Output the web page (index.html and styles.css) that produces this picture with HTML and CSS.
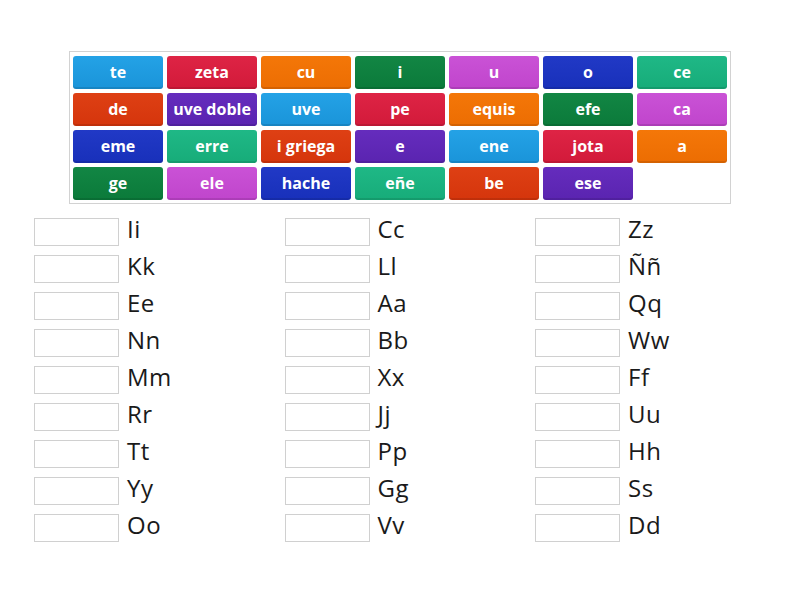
FILE: index.html
```html
<!DOCTYPE html>
<html lang="es">
<head>
<meta charset="utf-8">
<title>Abecedario</title>
<link rel="stylesheet" href="styles.css">
</head>
<body>
<div class="page">
  <div class="bank">
    <div class="tile blue">te</div>
    <div class="tile red">zeta</div>
    <div class="tile orange">cu</div>
    <div class="tile green">i</div>
    <div class="tile magenta">u</div>
    <div class="tile navy">o</div>
    <div class="tile teal">ce</div>
    <div class="tile rust">de</div>
    <div class="tile purple">uve doble</div>
    <div class="tile blue">uve</div>
    <div class="tile red">pe</div>
    <div class="tile orange">equis</div>
    <div class="tile green">efe</div>
    <div class="tile magenta">ca</div>
    <div class="tile navy">eme</div>
    <div class="tile teal">erre</div>
    <div class="tile rust">i griega</div>
    <div class="tile purple">e</div>
    <div class="tile blue">ene</div>
    <div class="tile red">jota</div>
    <div class="tile orange">a</div>
    <div class="tile green">ge</div>
    <div class="tile magenta">ele</div>
    <div class="tile navy">hache</div>
    <div class="tile teal">eñe</div>
    <div class="tile rust">be</div>
    <div class="tile purple">ese</div>
  </div>
  <div class="answers">
    <div class="col">
      <div class="row"><span class="box"></span><span class="label">Ii</span></div>
      <div class="row"><span class="box"></span><span class="label">Kk</span></div>
      <div class="row"><span class="box"></span><span class="label">Ee</span></div>
      <div class="row"><span class="box"></span><span class="label">Nn</span></div>
      <div class="row"><span class="box"></span><span class="label">Mm</span></div>
      <div class="row"><span class="box"></span><span class="label">Rr</span></div>
      <div class="row"><span class="box"></span><span class="label">Tt</span></div>
      <div class="row"><span class="box"></span><span class="label">Yy</span></div>
      <div class="row"><span class="box"></span><span class="label">Oo</span></div>
    </div>
    <div class="col">
      <div class="row"><span class="box"></span><span class="label">Cc</span></div>
      <div class="row"><span class="box"></span><span class="label">Ll</span></div>
      <div class="row"><span class="box"></span><span class="label">Aa</span></div>
      <div class="row"><span class="box"></span><span class="label">Bb</span></div>
      <div class="row"><span class="box"></span><span class="label">Xx</span></div>
      <div class="row"><span class="box"></span><span class="label">Jj</span></div>
      <div class="row"><span class="box"></span><span class="label">Pp</span></div>
      <div class="row"><span class="box"></span><span class="label">Gg</span></div>
      <div class="row"><span class="box"></span><span class="label">Vv</span></div>
    </div>
    <div class="col">
      <div class="row"><span class="box"></span><span class="label">Zz</span></div>
      <div class="row"><span class="box"></span><span class="label">Ññ</span></div>
      <div class="row"><span class="box"></span><span class="label">Qq</span></div>
      <div class="row"><span class="box"></span><span class="label">Ww</span></div>
      <div class="row"><span class="box"></span><span class="label">Ff</span></div>
      <div class="row"><span class="box"></span><span class="label">Uu</span></div>
      <div class="row"><span class="box"></span><span class="label">Hh</span></div>
      <div class="row"><span class="box"></span><span class="label">Ss</span></div>
      <div class="row"><span class="box"></span><span class="label">Dd</span></div>
    </div>
  </div>
</div>
</body>
</html>
```

FILE: styles.css
```css
* { box-sizing: border-box; }
html, body { margin: 0; padding: 0; background: #fff; }
body {
  width: 800px;
  height: 600px;
  font-family: "Open Sans", "Noto Sans", sans-serif;
  color: #1a1a1a;
}
.page { padding-top: 51px; }

.bank {
  width: 662px;
  margin: 0 auto;
  padding: 4px 3px 3px 3px;
  border: 1px solid #d2d2d2;
  display: grid;
  grid-template-columns: repeat(7, 90px);
  grid-auto-rows: 33px;
  gap: 4px;
}
.tile {
  border-radius: 3px;
  color: #fff;
  font-weight: 700;
  font-size: 16px;
  display: flex;
  align-items: center;
  justify-content: center;
  white-space: nowrap;
  box-shadow: inset 0 -2px 0 rgba(0,0,0,0.1);
  padding-bottom: 2px;
}
.blue    { background: linear-gradient(#24a2e6, #1a94d9); }
.red     { background: linear-gradient(#de2445, #d21a3a); }
.orange  { background: linear-gradient(#f47708, #ec6d02); }
.green   { background: linear-gradient(#128644, #0b7a3a); }
.magenta { background: linear-gradient(#ca52d6, #c045cc); }
.navy    { background: linear-gradient(#2139c6, #1830ba); }
.teal    { background: linear-gradient(#1fb886, #17ac79); }
.rust    { background: linear-gradient(#de4014, #d5350c); }
.purple  { background: linear-gradient(#652cbd, #5a24b0); }

.answers {
  display: flex;
  padding-left: 34px;
  margin-top: 14px;
}
.col {
  width: 250.5px;
  display: flex;
  flex-direction: column;
  gap: 9px;
}
.row {
  display: flex;
  align-items: center;
  height: 28px;
  gap: 7px;
}
.box {
  width: 85px;
  height: 28px;
  border: 1px solid #d0d0d0;
  background: #fff;
  flex: none;
}
.label {
  font-size: 24px;
  line-height: 28px;
  letter-spacing: 0.5px;
  margin-top: -7px;
  padding-left: 1px;
  color: #1a1a1a;
}
```
